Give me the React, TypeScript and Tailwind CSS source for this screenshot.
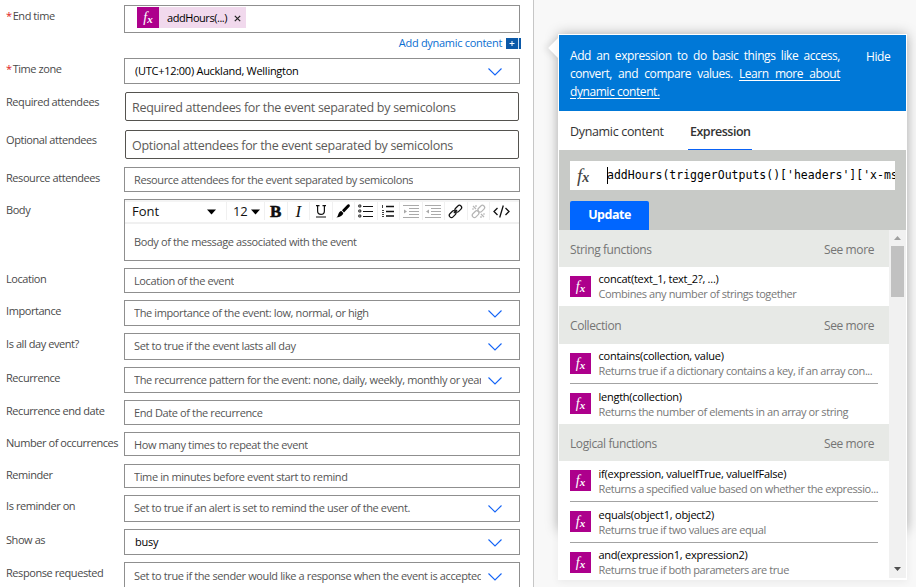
import type { ReactNode } from 'react';
import clsx from 'clsx';

type FieldProps = {
  label: string;
  text?: string;
  box: string;
  required?: boolean;
  select?: boolean;
  filled?: boolean;
  large?: boolean;
  children?: ReactNode;
};

const ATTENDEE_FIELDS: FieldProps[] = [
  { label: 'Required attendees', text: 'Required attendees for the event separated by semicolons', box: 'mt-[8px] h-[29px]', large: true },
  { label: 'Optional attendees', text: 'Optional attendees for the event separated by semicolons', box: 'mt-[9px] h-[29px]', large: true },
  { label: 'Resource attendees', text: 'Resource attendees for the event separated by semicolons', box: 'mt-[8px] h-[25px]' },
];

const EVENT_FIELDS: FieldProps[] = [
  { label: 'Location', text: 'Location of the event', box: 'mt-[7px] h-[25px]' },
  { label: 'Importance', text: 'The importance of the event: low, normal, or high', box: 'mt-[7px] h-[26px]', select: true },
  { label: 'Is all day event?', text: 'Set to true if the event lasts all day', box: 'mt-[7px] h-[27px]', select: true },
  { label: 'Recurrence', text: 'The recurrence pattern for the event: none, daily, weekly, monthly or year', box: 'mt-[7px] h-[26px]', select: true },
  { label: 'Recurrence end date', text: 'End Date of the recurrence', box: 'mt-[7px] h-[25px]' },
  { label: 'Number of occurrences', text: 'How many times to repeat the event', box: 'mt-[7px] h-[24px]' },
  { label: 'Reminder', text: 'Time in minutes before event start to remind', box: 'mt-[8px] h-[24px]' },
  { label: 'Is reminder on', text: 'Set to true if an alert is set to remind the user of the event.', box: 'mt-[7px] h-[27px]', select: true },
  { label: 'Show as', text: 'busy', box: 'mt-[7px] h-[26px]', select: true, filled: true },
  { label: 'Response requested', text: 'Set to true if the sender would like a response when the event is accepted', box: 'mt-[7px] h-[28px]', select: true },
];

const GROUPS = [
  {
    name: 'String functions',
    head: 'h-[37px]',
    items: [{ sig: 'concat(text_1, text_2?, ...)', desc: 'Combines any number of strings together', row: 'h-[39px]', pad: 'pt-[4px]' }],
  },
  {
    name: 'Collection',
    head: 'h-[38px]',
    items: [
      { sig: 'contains(collection, value)', desc: 'Returns true if a dictionary contains a key, if an array con...', row: 'h-[40px] border-b', pad: 'pt-[4px]' },
      { sig: 'length(collection)', desc: 'Returns the number of elements in an array or string', row: 'h-[40px]', pad: 'pt-[5px]' },
    ],
  },
  {
    name: 'Logical functions',
    head: 'h-[37px]',
    items: [
      { sig: 'if(expression, valueIfTrue, valueIfFalse)', desc: 'Returns a specified value based on whether the expressio...', row: 'h-[41px] border-b', pad: 'pt-[5px]' },
      { sig: 'equals(object1, object2)', desc: 'Returns true if two values are equal', row: 'h-[41px] border-b', pad: 'pt-[5px]' },
      { sig: 'and(expression1, expression2)', desc: 'Returns true if both parameters are true', row: 'h-[37px]', pad: 'pt-[4px]' },
    ],
  },
];

function Chevron() {
  return (
    <svg width="14" height="8" viewBox="0 0 14 8" className="mt-px shrink-0">
      <path d="M.5.5 7 7 13.5.5" fill="none" stroke="#1464f6" strokeWidth="1.1" />
    </svg>
  );
}

function Fx({ className }: { className?: string }) {
  return (
    <span className={clsx('flex shrink-0 items-center justify-center bg-[#ad008c] font-["Liberation_Serif",serif] italic text-white', className)}>
      <span className="text-[14px] leading-none">f</span>
      <span className="mt-[4px] text-[11px] leading-none font-bold">x</span>
    </span>
  );
}

function Field({ label, text, box, required, select, filled, large, children }: FieldProps) {
  return (
    <div className={clsx('flex shrink-0', box)}>
      <div className={clsx('w-[124px] shrink-0 pl-[6px] text-[11px] leading-[22px] tracking-[-0.43px] whitespace-nowrap text-[#4a4a4a]', large && '-mt-px')}>
        {required && <span className="mr-[1px] text-[#e02020]">*</span>}
        {label}
      </div>
      {children ?? (
        <div
          className={clsx(
            'flex items-center border bg-white whitespace-nowrap',
            large
              ? 'mx-px w-[394px] rounded-[2px] border-[#55534f] pt-[3px] pl-[6px] text-[12.5px] tracking-[-0.3px] text-[#5c5a58]'
              : 'w-[396px] border-[#8f8f8f] text-[11px]',
            !large && (filled ? 'pl-[10px] tracking-[-0.27px] text-black' : 'pl-[9px] tracking-[-0.38px] text-[#555]'),
            !large && !select && 'pt-[2px]',
          )}
        >
          <span className={clsx('overflow-hidden', select && (filled ? 'mr-[7px] w-[346px]' : 'mr-[7px] w-[347px]'))}>{text}</span>
          {select && <Chevron />}
        </div>
      )}
    </div>
  );
}

function Tool({ children }: { children: ReactNode }) {
  return <span className="flex h-[18px] w-[22.5px] items-center justify-center border-r border-[#f0f0f0]">{children}</span>;
}

function Caret() {
  return (
    <svg width="9" height="6" viewBox="0 0 9 6">
      <path d="M0 .5h9L4.5 5.5z" fill="#000" />
    </svg>
  );
}

function ListIcon({ numbered }: { numbered?: boolean }) {
  return (
    <svg width="16" height="14" viewBox="0 0 16 14" fill="none" stroke="#111">
      {numbered ? (
        <>
          <path d="M6 2.5h8M6 7.5h8M6 12h8" strokeWidth="1.6" />
          <path d="M2.5 1v3M2 6.5h2M2 8.5h2M2 10.5h2M2 12.5h2" strokeWidth=".8" />
        </>
      ) : (
        <>
          <path d="M5 2.5h10M5 7.5h10M5 12.5h10" />
          <path d="M.8 1h2v2h-2zM.8 6h2v2h-2zM.8 11h2v2h-2z" strokeWidth=".9" />
        </>
      )}
    </svg>
  );
}

function IndentIcon({ left }: { left?: boolean }) {
  return (
    <svg width="16" height="13" viewBox="0 0 16 13" fill="none" stroke="#aaa">
      <path d="M0 .5h16M6 3.5h10M6 6.5h10M6 9.5h10M0 12.5h16" />
      <path d={left ? 'M4 4.5v4L1 6.5z' : 'M1 4.5v4l3-2z'} fill="#aaa" stroke="none" />
    </svg>
  );
}

function LinkIcon({ broken }: { broken?: boolean }) {
  return (
    <svg width="15" height="15" viewBox="0 0 15 15" fill="none" stroke={broken ? '#b5b5b5' : '#111'} strokeWidth="1.2">
      <rect x="-3.8" y="-2.2" width="7.6" height="4.4" rx="2.2" transform="translate(4.6 10.2) rotate(-45)" />
      <rect x="-3.8" y="-2.2" width="7.6" height="4.4" rx="2.2" transform="translate(10.3 4.7) rotate(-45)" />
      {broken ? <path d="M2 2l3 3M5 1v2M1 5h2M10 10l3 3M10 12v2M12 10h2" /> : <path d="M5.8 9.1l3.3-3.3" />}
    </svg>
  );
}

function BodyEditor() {
  return (
    <div className="w-[396px] border border-[#8f8f8f] bg-white">
      <div className="flex h-[24px] items-center border-y-2 border-t-[#f4f4f4] border-b-[#f0f0f0] pb-[2px] pl-[2px] text-[#111]">
        <span className="flex h-[18px] w-[100px] items-center justify-between border-r border-[#f0f0f0] pt-px pr-[10px] pl-[5px] text-[13px]">
          Font <Caret />
        </span>
        <span className="flex h-[18px] w-[38px] items-center gap-[4px] border-r border-[#f0f0f0] pt-px pl-[6px] text-[13px] tracking-[-0.3px]">
          12 <Caret />
        </span>
        <Tool><span className='font-["Liberation_Serif",serif] text-[17px] leading-none font-black [-webkit-text-stroke:0.5px_#000]'>B</span></Tool>
        <Tool><span className='font-["Liberation_Serif",serif] text-[17px] leading-none italic'>I</span></Tool>
        <Tool>
          <svg width="12" height="13" viewBox="0 0 12 13" fill="none" stroke="#111">
            <path d="M1 .6h3.5M7.5.6H11M2.6.6V6a3.4 3.4 0 0 0 6.8 0V.6" strokeWidth="1.2" />
            <path d="M1 12h10" />
          </svg>
        </Tool>
        <Tool>
          <svg width="14" height="14" viewBox="0 0 14 14">
            <path d="M13.5.8c-.8-.8-1.6-.6-2.4.2L6 6.3 8 8.4 13.2 3c.7-.7.9-1.6.3-2.2z" />
            <path d="M5.3 7 7.4 9c-.7 2.4-3 4-7 4.5 1.5-1 1.3-1.7 1.9-3.3C2.9 8.5 4 7.2 5.3 7z" />
          </svg>
        </Tool>
        <Tool><ListIcon /></Tool>
        <Tool><ListIcon numbered /></Tool>
        <Tool><IndentIcon /></Tool>
        <Tool><IndentIcon left /></Tool>
        <Tool><LinkIcon /></Tool>
        <Tool><LinkIcon broken /></Tool>
        <span className="flex w-[23px] justify-center">
          <svg width="17" height="13" viewBox="0 0 17 13" fill="none" stroke="#111" strokeWidth="1.3">
            <path d="M4.5 3 1 6.5 4.5 10M12.5 3 16 6.5 12.5 10M10.3.5 6.7 12.5" />
          </svg>
        </span>
      </div>
      <div className="pt-[10px] pl-[9px] text-[11px] leading-[16px] tracking-[-0.38px] text-[#555]">Body of the message associated with the event</div>
    </div>
  );
}

function EventForm() {
  return (
    <div className="flex h-[587px] w-[534px] shrink-0 flex-col overflow-hidden border-r border-[#c6c6c6] bg-white">
      <Field label="End time" box="mt-[5px] h-[28px]" required>
        <div className="w-[396px] border border-[#8f8f8f] pt-px pl-[12px]">
          <span className="flex h-[21px] w-[109px] items-center bg-[#f1d9ed] text-[11px] text-black">
            <Fx className="h-[21px] w-[22px]" />
            <span className="ml-[8px] w-[61px] pt-px tracking-[-0.45px]">addHours(...)</span>
            <svg width="7" height="7" viewBox="0 0 7 7" className="mt-[2px] ml-[6px]">
              <path d="M.8.8l5.4 5.4M6.2.8.8 6.2" stroke="#222" strokeWidth="1.2" />
            </svg>
          </span>
        </div>
      </Field>
      <div className="mt-[2px] mr-[12px] flex h-[16px] shrink-0 items-center justify-end gap-[4px] text-[11px] tracking-[-0.3px] text-[#0a6ed1]">
        Add dynamic content
        <span className="flex h-[11px] w-[15px] bg-[#0b59a8]">
          <svg width="15" height="11" viewBox="0 0 15 11">
            <path d="M3.5 5.5h5M6 3v5" stroke="#fff" />
            <path d="M12.5 0v11" stroke="#cfe2f5" />
          </svg>
        </span>
      </div>
      <Field label="Time zone" text="(UTC+12:00) Auckland, Wellington" box="mt-[7px] h-[26px]" required select filled />
      {ATTENDEE_FIELDS.map(f => <Field key={f.label} {...f} />)}
      <Field label="Body" box="mt-[7px] h-[62px]">
        <BodyEditor />
      </Field>
      {EVENT_FIELDS.map(f => <Field key={f.label} {...f} />)}
    </div>
  );
}

function FunctionList() {
  return (
    <div className="flex h-[350px] bg-white">
      <div className="w-[330px]">
        {GROUPS.map(g => (
          <section key={g.name}>
            <div className={clsx('flex items-center justify-between bg-[#e7e9e6] pt-[2px] pr-[15px] pl-[11px] text-[12px] tracking-[-0.4px] text-[#757575]', g.head)}>
              <span>{g.name}</span>
              <span>See more</span>
            </div>
            {g.items.map(item => (
              <div key={item.sig} className={clsx('mr-[11px] ml-[11px] flex border-[#a3a3a3] whitespace-nowrap', item.row)}>
                <Fx className="mt-[9px] h-[21px] w-[21px]" />
                <div className={clsx('ml-[7.5px] text-[11px] leading-[15px]', item.pad)}>
                  <div className="tracking-[-0.25px] text-black">{item.sig}</div>
                  <div className="tracking-[-0.41px] text-[#777]">{item.desc}</div>
                </div>
              </div>
            ))}
          </section>
        ))}
      </div>
      <div className="flex h-[348px] w-[17px] flex-col items-center bg-[#f1f1f1]">
        <svg width="7" height="4" viewBox="0 0 7 4" className="mt-[6px]">
          <path d="M3.5 0 7 4H0z" fill="#a0a0a0" />
        </svg>
        <div className="mt-[6px] h-[51px] w-[13px] bg-[#c1c1c1]" />
        <svg width="7" height="4" viewBox="0 0 7 4" className="mt-auto mb-[7px]">
          <path d="M0 0h7L3.5 4z" fill="#505050" />
        </svg>
      </div>
    </div>
  );
}

function ExpressionPanel() {
  return (
    <div className="relative mt-[34px] ml-[24px] h-[496px] w-[349px] bg-white shadow-[0_0_12px_rgba(0,0,0,0.28)]">
      {/* callout beak */}
      <span className="absolute top-[7px] -left-[7px] h-[14px] w-[14px] rotate-45 bg-white shadow-[-3px_3px_6px_rgba(0,0,0,0.08)]" />
      <div className="relative h-[546px] w-[349px] border border-white bg-white shadow-[0_2px_8px_rgba(0,0,0,0.06)]">
        <div className="flex h-[76px] bg-[#0078d7] pt-[12px] pl-[11px] text-[12px] leading-[18px] tracking-[-0.43px] text-white">
          <div className="w-[270px]">
            <p className="[text-align-last:justify]">Add an expression to do basic things like access,</p>
            <p className="[text-align-last:justify]">convert, and compare values. <span className="underline underline-offset-2">Learn more about</span></p>
            <p><span className="underline underline-offset-2">dynamic content.</span></p>
          </div>
          <span className="ml-[26px] pt-px">Hide</span>
        </div>
        <div className="flex h-[39px] pl-[11px] text-[12.5px] text-[#333]">
          <span className="w-[118px] pt-[11px] leading-[20px] tracking-[-0.33px]">Dynamic content</span>
          <span className="h-[39px] w-[64px] border-b border-[#0a62f5] pt-[11px] pl-[2px] leading-[20px] font-semibold tracking-[-0.5px]">Expression</span>
        </div>
        <div className="h-[80px] bg-[#c8cac7] px-[11px] pt-[11px]">
          <div className="flex h-[29px] items-center overflow-hidden bg-white">
            <span className='flex w-[37px] shrink-0 pl-[7px] font-["Liberation_Serif",serif] text-[#444] italic'>
              <span className="text-[19px] leading-none">f</span>
              <span className="mt-[5px] text-[14px] leading-none font-bold">x</span>
            </span>
            <span className="h-[17px] w-px shrink-0 bg-black" />
            <span className='-ml-px font-["DejaVu_Sans_Mono",monospace] text-[11.5px] whitespace-nowrap text-black'>
              addHours(triggerOutputs()['headers']['x-ms
            </span>
          </div>
          <button className="mt-[11px] block h-[29px] w-[79px] rounded-t-[2px] bg-[#0066ff] text-[12.5px] font-bold tracking-[-0.5px] text-white">Update</button>
        </div>
        <FunctionList />
      </div>
    </div>
  );
}

export default function App() {
  return (
    <div className='h-[588px] w-[916px] overflow-hidden bg-white font-["Open_Sans","Noto_Sans",sans-serif]'>
      <div className="flex h-[587px] overflow-hidden bg-[#f8f8f8]">
        <EventForm />
        <ExpressionPanel />
      </div>
    </div>
  );
}
